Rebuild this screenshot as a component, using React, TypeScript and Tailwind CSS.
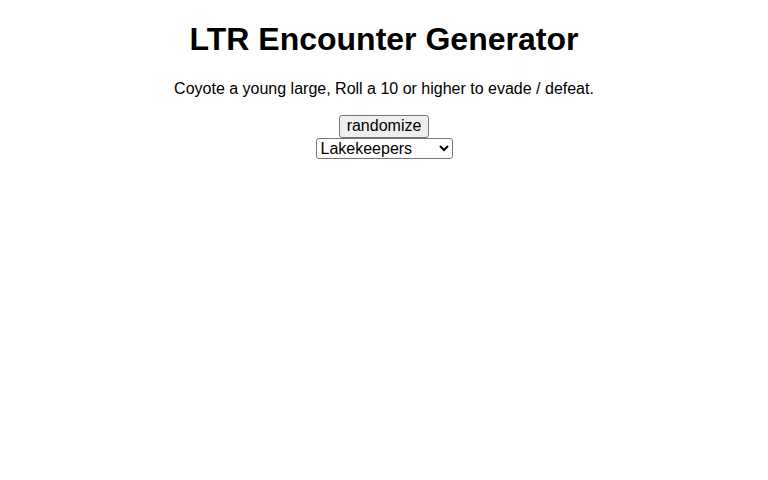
import { useState } from "react";

const groups = ["Lakekeepers", "Forest Wardens", "Hill Wanderers", "Desert Nomads"];

export default function App() {
  const [group, setGroup] = useState(groups[0]);

  return (
    <div className="flex flex-col items-center bg-white text-black font-['Liberation_Sans',Arial,sans-serif]">
      <h1 className="mt-[21.44px] text-[32px] font-bold leading-[normal]">LTR Encounter Generator</h1>
      <p className="mt-[21.44px] text-base leading-[normal]">
        Coyote a young large, Roll a 10 or higher to evade / defeat.
      </p>
      <button className="mt-[17px] h-[23px] w-[90px] rounded-[3px] border border-[#767676] bg-[#efefef] px-[6px] text-base leading-[normal]">
        randomize
      </button>
      <select
        value={group}
        onChange={(e) => setGroup(e.target.value)}
        className="h-[21px] w-[137px] rounded-[3px] border border-[#767676] bg-white text-base leading-[normal]"
      >
        {groups.map((g) => (
          <option key={g}>{g}</option>
        ))}
      </select>
    </div>
  );
}
